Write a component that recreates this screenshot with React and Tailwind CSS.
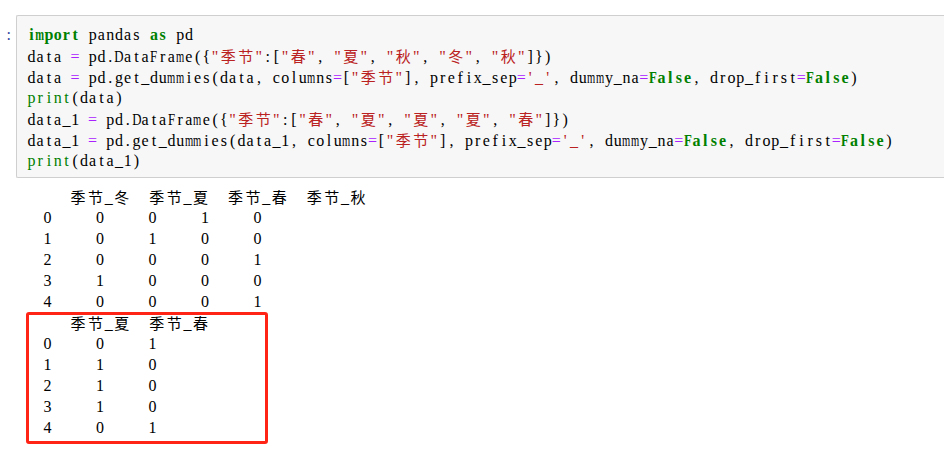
import React from 'react';

const tone = {
  k: 'text-[#008000] font-bold',
  b: 'text-[#008000]',
  o: 'text-[#aa22ff]',
  s: 'text-[#ba2121]',
  n: 'text-black',
};

const code = [
  [['import', 'k'], [' pandas ', 'n'], ['as', 'k'], [' pd', 'n']],
  [
    ['data ', 'n'], ['=', 'o'], [' pd.DataFrame({', 'n'], ['"季节"', 's'], [':[', 'n'],
    ['"春"', 's'], [', ', 'n'], ['"夏"', 's'], [', ', 'n'], ['"秋"', 's'], [', ', 'n'],
    ['"冬"', 's'], [', ', 'n'], ['"秋"', 's'], [']})', 'n'],
  ],
  [
    ['data ', 'n'], ['=', 'o'], [' pd.get_dummies(data, columns', 'n'], ['=', 'o'], ['[', 'n'],
    ['"季节"', 's'], ['], prefix_sep', 'n'], ['=', 'o'], ["'_'", 's'], [', dummy_na', 'n'],
    ['=', 'o'], ['False', 'k'], [', drop_first', 'n'], ['=', 'o'], ['False', 'k'], [')', 'n'],
  ],
  [['print', 'b'], ['(data)', 'n']],
  [
    ['data_1 ', 'n'], ['=', 'o'], [' pd.DataFrame({', 'n'], ['"季节"', 's'], [':[', 'n'],
    ['"春"', 's'], [', ', 'n'], ['"夏"', 's'], [', ', 'n'], ['"夏"', 's'], [', ', 'n'],
    ['"夏"', 's'], [', ', 'n'], ['"春"', 's'], [']})', 'n'],
  ],
  [
    ['data_1 ', 'n'], ['=', 'o'], [' pd.get_dummies(data_1, columns', 'n'], ['=', 'o'], ['[', 'n'],
    ['"季节"', 's'], ['], prefix_sep', 'n'], ['=', 'o'], ["'_'", 's'], [', dummy_na', 'n'],
    ['=', 'o'], ['False', 'k'], [', drop_first', 'n'], ['=', 'o'], ['False', 'k'], [')', 'n'],
  ],
  [['print', 'b'], ['(data_1)', 'n']],
];

const output = [
  '   季节_冬  季节_夏  季节_春  季节_秋',
  '0     0     0     1     0',
  '1     0     1     0     0',
  '2     0     0     0     1',
  '3     1     0     0     0',
  '4     0     0     0     1',
  '   季节_夏  季节_春',
  '0     0     1',
  '1     1     0',
  '2     1     0',
  '3     1     0',
  '4     0     1',
];

// fixed grid like the notebook's Song font: ASCII = one cell, CJK = two cells
const Mono = ({ text }) =>
  Array.from(text).map((ch, i) => {
    if (/[\u4e00-\u9fff]/.test(ch)) {
      return (
        <span
          key={i}
          className="inline-flex w-[17.5px] justify-center font-[family-name:'Noto_Sans_CJK_SC',sans-serif] text-[15px]"
        >
          {ch}
        </span>
      );
    }
    const squeeze = /[mwMW]/.test(ch) ? 'scale-x-[0.66]' : /[A-Z]/.test(ch) ? 'scale-x-[0.8]' : '';
    return (
      <span key={i} className="inline-flex w-[8.75px] justify-center">
        <span className={squeeze}>{ch === ' ' ? '\u00a0' : ch}</span>
      </span>
    );
  });

const App = () => {
  return (
    <div className="relative h-[451px] w-[944px] overflow-hidden bg-white font-[family-name:'Liberation_Serif','Noto_Sans_CJK_SC',serif] text-[16px]">
      <div className="flex pt-[15px]">
        <div className="w-[16px] shrink-0 pt-[9px] pr-[5px] text-right leading-[21px] text-[#303f9f]">:</div>
        <div className="flex-1 rounded-l-[2px] border border-r-0 border-[#cfcfcf] bg-[#f7f7f7] pt-[8px] pb-[6px] pl-[10px]">
          {code.map((line, i) => (
            <div key={i} className="h-[21px] whitespace-pre leading-[21px]">
              {line.map(([t, k], j) => (
                <span key={j} className={tone[k]}>
                  <Mono text={t} />
                </span>
              ))}
            </div>
          ))}
        </div>
      </div>

      <div className="mt-[8px] pl-[43px] text-black">
        {output.map((line, i) => (
          <div key={i} className="h-[21px] whitespace-pre leading-[21px]">
            <Mono text={line} />
          </div>
        ))}
      </div>

      <div className="absolute left-[26px] top-[312px] h-[132px] w-[242px] rounded-[3px] border-[3px] border-[#ff2415]" />
    </div>
  );
};

export default App;
